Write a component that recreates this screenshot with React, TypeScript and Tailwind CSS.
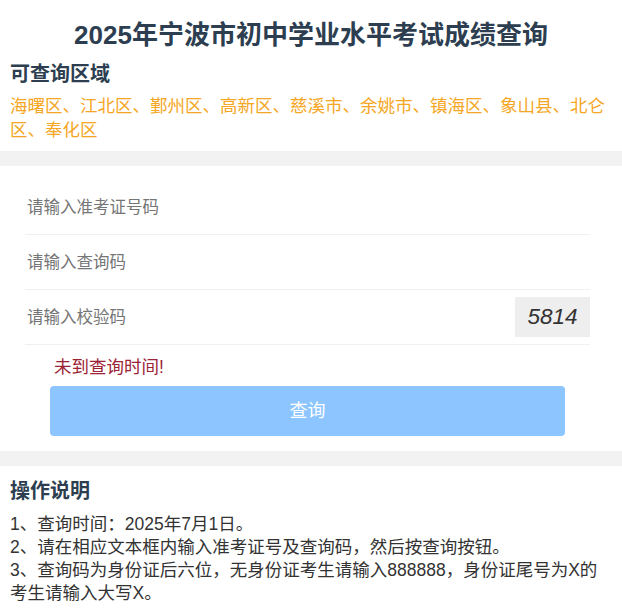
import { useState } from "react";

const areas = "海曙区、江北区、鄞州区、高新区、慈溪市、余姚市、镇海区、象山县、北仑区、奉化区";

export default function App() {
  const [ticket, setTicket] = useState("");
  const [code, setCode] = useState("");
  const [check, setCheck] = useState("");

  return (
    <div className="w-[622px] bg-white text-[#333] font-['Liberation_Sans','Noto_Sans_CJK_SC',sans-serif]">
      {/* header */}
      <div className="px-[10px] pt-[16px] pb-[9px]">
        <h1 className="text-center text-[26px] leading-[39px] font-bold text-[#2c3e50]">
          2025年宁波市初中学业水平考试成绩查询
        </h1>
        <h2 className="mt-[4px] text-[20px] leading-[30px] font-bold text-[#2c3e50]">可查询区域</h2>
        <p className="mt-[5px] text-[17.5px] leading-[24px] text-[#f5a623]">{areas}</p>
      </div>
      <div className="h-[15px] bg-[#f2f2f2]" />

      {/* form */}
      <div className="pt-[14px] pb-[15px]">
        <div className="ml-[25px] w-[565px]">
          <div className="flex h-[55px] items-center border-b border-[#f0f0f0]">
            <input
              value={ticket}
              onChange={(e) => setTicket(e.target.value)}
              placeholder="请输入准考证号码"
              className="w-full pl-[2px] text-[16.5px] outline-none placeholder:text-[#757575]"
            />
          </div>
          <div className="flex h-[55px] items-center border-b border-[#f0f0f0]">
            <input
              value={code}
              onChange={(e) => setCode(e.target.value)}
              placeholder="请输入查询码"
              className="w-full pl-[2px] text-[16.5px] outline-none placeholder:text-[#757575]"
            />
          </div>
          <div className="flex h-[55px] items-center border-b border-[#f0f0f0]">
            <input
              value={check}
              onChange={(e) => setCheck(e.target.value)}
              placeholder="请输入校验码"
              className="flex-1 pl-[2px] text-[16.5px] outline-none placeholder:text-[#757575]"
            />
            <div className="flex h-[40px] w-[75px] items-center justify-center bg-[#eeeeee] text-[22.5px] italic text-[#333]">
              5814
            </div>
          </div>
        </div>
        <p className="ml-[54px] mt-[10px] text-[17.5px] leading-[24px] text-[#9b2335]">未到查询时间!</p>
        <button className="ml-[50px] mt-[7px] h-[50px] w-[515px] rounded-[4px] bg-[#8cc5ff] text-[18px] text-white">
          查询
        </button>
      </div>
      <div className="h-[15px] bg-[#f2f2f2]" />

      {/* instructions */}
      <div className="px-[10px] pt-[10px] pb-[10px]">
        <h2 className="text-[20px] leading-[30px] font-bold text-[#2c3e50]">操作说明</h2>
        <div className="mt-[7px] text-[17.5px] leading-[23px] text-[#333]">
          <p>1、查询时间：2025年7月1日。</p>
          <p>2、请在相应文本框内输入准考证号及查询码，然后按查询按钮。</p>
          <p>3、查询码为身份证后六位，无身份证考生请输入888888，身份证尾号为X的考生请输入大写X。</p>
        </div>
      </div>
    </div>
  );
}
